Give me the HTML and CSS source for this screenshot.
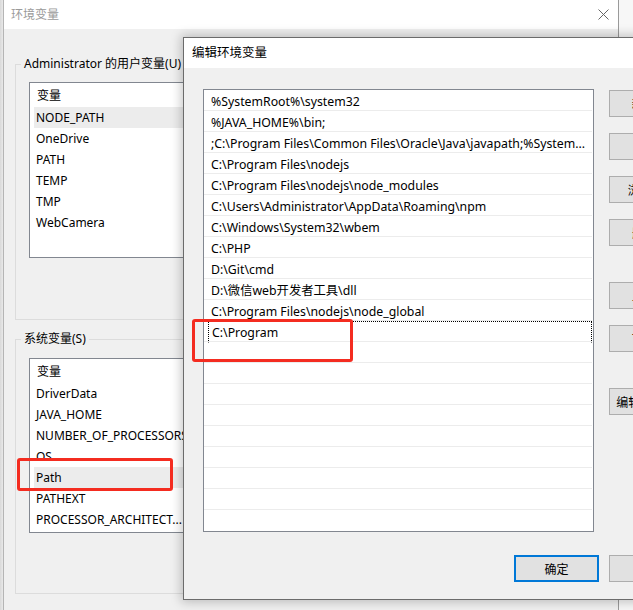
FILE: index.html
```html
<!DOCTYPE html>
<html lang="zh-CN">
<head>
<meta charset="utf-8">
<title>环境变量</title>
<link rel="stylesheet" href="styles.css">
</head>
<body>
<div class="desk">
  <div class="win">
    <div class="win-title">
      <span class="win-caption">环境变量</span>
      <svg class="close" width="11" height="11" viewBox="0 0 11 11"><path d="M0.5 0.5 L10.5 10.5 M10.5 0.5 L0.5 10.5" stroke="#666" stroke-width="1" fill="none"/></svg>
    </div>
    <div class="win-body">
      <fieldset class="grp grp1">
        <legend>Administrator 的用户变量(U)</legend>
        <div class="lv">
          <div class="lv-head">变量</div>
          <div class="lv-row sel">NODE_PATH</div>
          <div class="lv-row">OneDrive</div>
          <div class="lv-row">PATH</div>
          <div class="lv-row">TEMP</div>
          <div class="lv-row">TMP</div>
          <div class="lv-row">WebCamera</div>
        </div>
      </fieldset>
      <fieldset class="grp grp2">
        <legend>系统变量(S)</legend>
        <div class="lv">
          <div class="lv-head">变量</div>
          <div class="lv-row">DriverData</div>
          <div class="lv-row">JAVA_HOME</div>
          <div class="lv-row">NUMBER_OF_PROCESSORS</div>
          <div class="lv-row">OS</div>
          <div class="lv-row sel">Path</div>
          <div class="lv-row">PATHEXT</div>
          <div class="lv-row">PROCESSOR_ARCHITECT...</div>
        </div>
      </fieldset>
    </div>
  </div>

  <div class="dlg">
    <div class="dlg-title">编辑环境变量</div>
    <div class="dlg-body">
      <div class="dlg-main">
        <div class="plist">
          <div class="prow">%SystemRoot%\system32</div>
          <div class="prow">%JAVA_HOME%\bin;</div>
          <div class="prow">;C:\Program Files\Common Files\Oracle\Java\javapath;%System...</div>
          <div class="prow">C:\Program Files\nodejs</div>
          <div class="prow">C:\Program Files\nodejs\node_modules</div>
          <div class="prow">C:\Users\Administrator\AppData\Roaming\npm</div>
          <div class="prow">C:\Windows\System32\wbem</div>
          <div class="prow">C:\PHP</div>
          <div class="prow">D:\Git\cmd</div>
          <div class="prow">D:\微信web开发者工具\dll</div>
          <div class="prow">C:\Program Files\nodejs\node_global</div>
          <div class="prow editing"><span class="edit">C:\Program</span></div>
          <div class="prow"></div>
          <div class="prow"></div>
          <div class="prow"></div>
          <div class="prow"></div>
          <div class="prow"></div>
          <div class="prow"></div>
          <div class="prow"></div>
          <div class="prow"></div>
          <div class="prow last"></div>
        </div>
        <div class="side">
          <div class="bgroup">
            <button class="btn">新建(N)</button>
            <button class="btn">编辑(E)</button>
            <button class="btn">浏览(B)...</button>
            <button class="btn">删除(D)</button>
          </div>
          <div class="bgroup">
            <button class="btn">上移(U)</button>
            <button class="btn">下移(O)</button>
          </div>
          <div class="bgroup">
            <button class="btn">编辑文本(T)...</button>
          </div>
        </div>
      </div>
      <div class="dlg-foot">
        <button class="btn def">确定</button>
        <button class="btn">取消</button>
      </div>
    </div>
  </div>

  <div class="mark mark-path"></div>
  <div class="mark mark-edit"></div>
</div>
</body>
</html>
```

FILE: styles.css
```css
* { box-sizing: border-box; }
html, body {
  margin: 0;
  padding: 0;
}
body {
  width: 633px;
  height: 610px;
  overflow: hidden;
  background: #f2f2f2;
  font-family: "Noto Sans", "Noto Sans CJK SC", sans-serif;
  font-size: 12px;
  color: #000;
}
.desk {
  position: relative;
  width: 633px;
  height: 610px;
  overflow: hidden;
  background: linear-gradient(to right, #d9d9d9 0, #e9e9e9 3px, #f7f7f7 3px);
}

/* background window */
.win {
  position: absolute;
  left: 3px;
  top: 0;
  width: 616px;
  height: 640px;
  border-left: 1px solid #b5b5b5;
  border-right: 1px solid #9a9a9a;
  background: #f0f0f0;
  display: flex;
  flex-direction: column;
}
.win-title {
  height: 29px;
  flex: none;
  background: #fff;
  display: flex;
  align-items: center;
  justify-content: space-between;
  padding: 0 9px 1px 7px;
}
.win-caption {
  color: #9a9a9a;
  font-size: 12px;
}
.close { display: block; }
.win-body {
  padding: 27px 0 0 11px;
  display: flex;
  flex-direction: column;
  gap: 11px;
}
.grp {
  margin: 0;
  padding: 0 0 0 13px;
  border: 1px solid #dcdcdc;
  width: 590px;
  min-width: 0;
}
.grp legend {
  margin-left: -8px;
  padding: 0 3px;
  line-height: 16px;
  font-size: 12px;
}
.grp1 { height: 264px; }
.grp2 { height: 263px; }
.grp1 .lv { margin-top: 10px; height: 176px; }
.grp2 .lv { margin-top: 11px; height: 175px; }
.lv {
  width: 560px;
  border: 1px solid #828790;
  background: #fff;
  padding: 0 0 0 4px;
}
.lv-head {
  height: 24px;
  line-height: 26px;
  padding-left: 3px;
}
.lv-row {
  height: 21px;
  line-height: 22px;
  padding-left: 2px;
  white-space: nowrap;
}
.lv-row.sel { background: #ececec; }

/* edit dialog */
.dlg {
  position: absolute;
  left: 183px;
  top: 37px;
  width: 540px;
  height: 563px;
  border: 1px solid #6b6b6b;
  background: #f0f0f0;
  box-shadow: 0 0 10px 2px rgba(0, 0, 0, 0.22);
  display: flex;
  flex-direction: column;
}
.dlg-title {
  height: 30px;
  flex: none;
  background: #fff;
  line-height: 29px;
  padding-left: 8px;
  font-size: 12.5px;
}
.dlg-body {
  padding: 21px 0 0 19px;
}
.dlg-main {
  display: flex;
  gap: 15px;
  align-items: flex-start;
}
.plist {
  width: 391px;
  height: 443px;
  border: 1px solid #828790;
  background: #fff;
  flex: none;
}
.prow {
  height: 21px;
  line-height: 23px;
  padding-left: 7px;
  margin-right: 1px;
  border-bottom: 1px solid #ececec;
  white-space: nowrap;
  overflow: hidden;
  font-size: 12.3px;
}
.prow.last { border-bottom: 0; }
.prow.editing {
  padding-left: 4px;
  overflow: visible;
}
.edit {
  display: block;
  height: 22px;
  margin-top: 0;
  padding-left: 3px;
  line-height: 22px;
  border: 1px dotted #000;
  border-bottom-color: transparent;
}
.side {
  display: flex;
  flex-direction: column;
  gap: 36px;
  padding-top: 1px;
}
.bgroup {
  display: flex;
  flex-direction: column;
  gap: 16px;
}
.btn {
  width: 85px;
  height: 27px;
  padding: 0;
  margin: 0;
  border: 1px solid #adadad;
  background: #e1e1e1;
  font-family: inherit;
  font-size: 12px;
  color: #000;
  white-space: nowrap;
  text-align: center;
  flex: none;
}
.side .btn { width: 86px; }
.btn.def { border: 2px solid #0078d7; }
.dlg-foot {
  display: flex;
  gap: 10px;
  margin-top: 23px;
  padding-left: 311px;
}

/* red annotation marks */
.mark {
  position: absolute;
  border: 3px solid #f42c20;
  border-radius: 3px;
}
.mark-path {
  left: 17px;
  top: 458px;
  width: 156px;
  height: 33px;
}
.mark-edit {
  left: 192px;
  top: 319px;
  width: 161px;
  height: 43px;
}
```
